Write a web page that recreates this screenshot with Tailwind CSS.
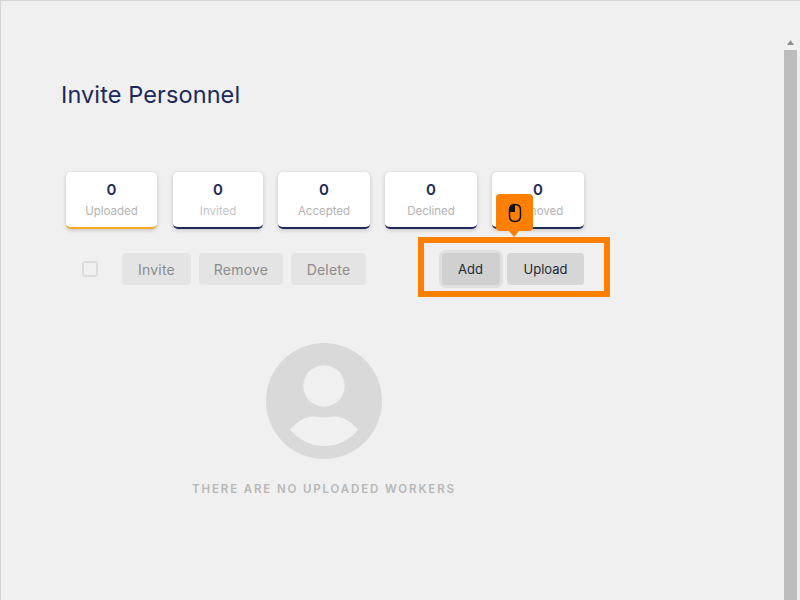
<!DOCTYPE html>
<html lang="en">
<head>
<meta charset="utf-8">
<script src="https://cdn.jsdelivr.net/npm/@tailwindcss/browser@4"></script>
<title>Invite Personnel</title>
</head>
<body class="relative w-[800px] h-[600px] overflow-hidden bg-[#f0f0f0] font-['Inter','Liberation_Sans',sans-serif]">
<div class="w-[800px] h-[600px] border-t border-l border-[#d4d4d4] flex">
  <main class="w-[783px] h-full flex flex-col">
    <h1 class="ml-[60px] mt-[80px] h-[28px] text-[23.500px] leading-[28px] font-normal text-[#1b2a5b] tracking-[0.1px]">Invite Personnel</h1>

    <section class="ml-[65px] mt-[63px] flex gap-[15px] w-[520px] text-center">
      <div class="w-[91px] h-[57px] rounded-[5px] bg-white border-b-2 border-[#f9a825] shadow-[0_1px_4px_rgba(0,0,0,0.2)] pt-[8px]">
        <div class="text-[15px] leading-[20px] font-semibold text-[#1b2a5b]">0</div>
        <div class="mt-[3px] text-[11.500px] leading-[16px] text-[#b4b4b4]">Uploaded</div>
      </div>
      <div class="w-[90px] h-[57px] ml-px rounded-[5px] bg-white border-b-2 border-[#1b2a5b] shadow-[0_1px_4px_rgba(0,0,0,0.2)] pt-[8px]">
        <div class="text-[15px] leading-[20px] font-semibold text-[#1b2a5b]">0</div>
        <div class="mt-[3px] text-[11.500px] leading-[16px] text-[#c4c4c4]">Invited</div>
      </div>
      <div class="w-[92px] h-[57px] rounded-[5px] bg-white border-b-2 border-[#1b2a5b] shadow-[0_1px_4px_rgba(0,0,0,0.2)] pt-[8px]">
        <div class="text-[15px] leading-[20px] font-semibold text-[#1b2a5b]">0</div>
        <div class="mt-[3px] text-[11.500px] leading-[16px] text-[#b4b4b4]">Accepted</div>
      </div>
      <div class="w-[92px] h-[57px] rounded-[5px] bg-white border-b-2 border-[#1b2a5b] shadow-[0_1px_4px_rgba(0,0,0,0.2)] pt-[8px]">
        <div class="text-[15px] leading-[20px] font-semibold text-[#1b2a5b]">0</div>
        <div class="mt-[3px] text-[11.500px] leading-[16px] text-[#b4b4b4]">Declined</div>
      </div>
      <div class="w-[92px] h-[57px] rounded-[5px] bg-white border-b-2 border-[#1b2a5b] shadow-[0_1px_4px_rgba(0,0,0,0.2)] pt-[8px]">
        <div class="text-[15px] leading-[20px] font-semibold text-[#1b2a5b]">0</div>
        <div class="mt-[3px] text-[11.500px] leading-[16px] text-[#b4b4b4]">Removed</div>
      </div>
    </section>

    <section class="ml-[81px] mt-[24px] h-[32px] flex items-center text-[13px]">
      <span class="w-[16px] h-[16px] rounded-[3px] border-2 border-[#dcdcdc] bg-[#f0f0f0]"></span>
      <button class="ml-[24px] w-[69px] h-[32px] rounded-[4px] bg-[#e4e4e4] text-[14px] tracking-[0.2px] text-[#8c8c8c]">Invite</button>
      <button class="ml-[8px] w-[84px] h-[32px] rounded-[4px] bg-[#e4e4e4] text-[14px] tracking-[0.2px] text-[#8c8c8c]">Remove</button>
      <button class="ml-[8px] w-[75px] h-[32px] rounded-[4px] bg-[#e4e4e4] text-[14px] tracking-[0.2px] text-[#8c8c8c]">Delete</button>
      <button class="ml-[76px] w-[58px] h-[32px] pt-px pr-px rounded-[4px] bg-[#d0d0d0] text-[#1f2937] ring-[3px] ring-[#e0e0e0]">Add</button>
      <button class="ml-[7px] w-[77px] h-[32px] pt-px rounded-[4px] bg-[#d6d6d6] text-[#1f2937]">Upload</button>
    </section>

    <section class="ml-[65px] w-[516px] mt-[58px] flex flex-col items-center">
      <svg class="w-[116px] h-[116px]" viewBox="0 0 116 116" aria-hidden="true">
        <circle cx="58" cy="58" r="58" fill="#d9d9d9"/>
        <circle cx="58" cy="43" r="20.700" fill="#f0f0f0"/>
        <path d="M24 86.500 C31 79 38 74 46 73.500 C52 73 54 74.500 58 74.500 C62 74.500 64 73 70 73.500 C78 74 85 79 92 86.500 C84 97 72 103 58 103 C45 103 33 97 24 86.500 Z" fill="#f0f0f0"/>
      </svg>
      <p class="mt-[22px] text-[11.500px] leading-[16px] font-semibold tracking-[1.860px] text-[#b7b7b7] whitespace-nowrap">THERE ARE NO UPLOADED WORKERS</p>
    </section>
  </main>

  <aside class="relative w-[16px] h-full">
    <svg class="absolute left-[3px] top-[39px] w-[7px] h-[5px]" viewBox="0 0 7 5" aria-hidden="true"><path d="M3.500 0 L7 5 H0 Z" fill="#8f8f8f"/></svg>
    <div class="absolute left-[0px] top-[49px] w-[13px] h-[550px] bg-[#bdbdbd]"></div>
  </aside>
</div>

<div class="absolute left-[418px] top-[237px] w-[192px] h-[60px] border-[6px] border-[#ff8000] pointer-events-none"></div>
<div class="absolute left-[496px] top-[194px] w-[37px] h-[37px] rounded-[4px] bg-[#ff8000] flex items-center justify-center">
  <svg class="w-[14px] h-[20px]" viewBox="0 0 14 20" aria-hidden="true">
    <path d="M7 1.500 C3.500 1.500 1.500 3.500 1.500 7 V13 C1.500 16.500 3.500 18.500 7 18.500 C10.500 18.500 12.500 16.500 12.500 13 V7 C12.500 3.500 10.500 1.500 7 1.500 Z" fill="none" stroke="#111" stroke-width="1.500"/>
    <path d="M7 2 C4 2 2 4 2 7 V9 H7 Z" fill="#111"/>
  </svg>
  <span class="absolute left-[13px] top-[37px] w-0 h-0 border-x-[5px] border-x-transparent border-t-[6px] border-t-[#ff8000]"></span>
</div>
</body>
</html>
